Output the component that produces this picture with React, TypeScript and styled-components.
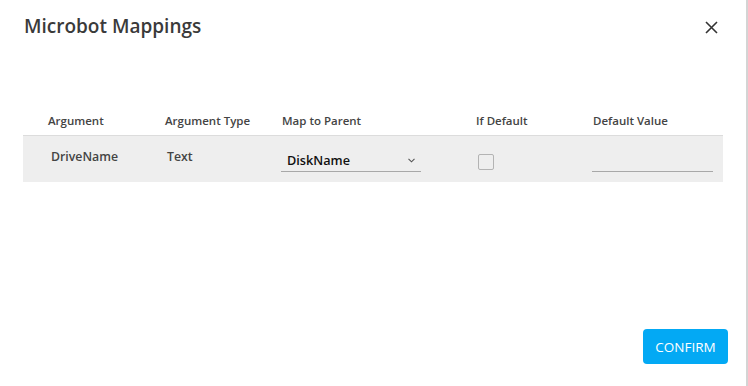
import React from "react";
import styled, { createGlobalStyle } from "styled-components";

const Global = createGlobalStyle`
  html, body { margin: 0; padding: 0; background: #fff; }
  body { font-family: "Open Sans", "Noto Sans", "Liberation Sans", sans-serif; }
  * { box-sizing: border-box; }
`;

const Dialog = styled.div`
  width: 748px;
  height: 386px;
  background: #fff;
  border-right: 2px solid #d4d4d4;
  display: flex;
  flex-direction: column;
  position: relative;
`;

const Header = styled.div`
  display: flex;
  align-items: center;
  justify-content: space-between;
  padding: 11px 28px 0 24px;
  height: 40px;
`;

const Title = styled.h2`
  margin: 0;
  font-size: 19px;
  font-weight: 600;
  color: #3a3a3a;
  letter-spacing: 0;
`;

const CloseButton = styled.button`
  border: none;
  background: transparent;
  padding: 0;
  width: 14px;
  height: 14px;
  display: flex;
  align-items: center;
  justify-content: center;
  cursor: pointer;
  margin-top: 4px;
`;

const Body = styled.div`
  padding: 67px 23px 0 23px;
  flex: 1;
`;

const Row = styled.div<{ $head?: boolean }>`
  display: grid;
  grid-template-columns: 117px 117px 194px 117px 1fr;
  width: 700px;
  align-items: center;
  background: ${(p) => (p.$head ? "#fff" : "#eeeeee")};
  height: ${(p) => (p.$head ? "29px" : "46px")};
  border-bottom: ${(p) => (p.$head ? "1px solid #dcdcdc" : "none")};
`;

const HeadCell = styled.div`
  padding-left: 25px;
  font-size: 11.5px;
  font-weight: 600;
  color: #444;
  padding-bottom: 1px;
`;

const Cell = styled.div<{ $pad: number; $shift?: number }>`
  padding-left: ${(p) => p.$pad}px;
  padding-top: ${(p) => Math.max(0, p.$shift ?? 0)}px;
  padding-bottom: ${(p) => Math.max(0, -(p.$shift ?? 0))}px;
  font-size: 12.3px;
  font-weight: 600;
  color: #444;
  display: flex;
  align-items: center;
`;

const SelectBox = styled.div`
  width: 140px;
  height: 25px;
  border-bottom: 1px solid #a8a8a8;
  display: flex;
  align-items: center;
  justify-content: space-between;
  padding: 3px 6px 0 6px;
  font-size: 12.7px;
  font-weight: 600;
  color: #111;
`;

const Checkbox = styled.span`
  width: 16px;
  height: 16px;
  border: 1px solid #b3b3b3;
  border-radius: 2px;
  background: #eee;
  display: inline-block;
`;

const TextInput = styled.div`
  width: 121px;
  height: 27px;
  border-bottom: 1px solid #a8a8a8;
`;

const Footer = styled.div`
  display: flex;
  justify-content: flex-end;
  padding: 0 18px 22px 0;
`;

const ConfirmButton = styled.button`
  background: #03a9f4;
  color: #fff;
  border: none;
  border-radius: 4px;
  width: 85px;
  height: 35px;
  font-family: "Open Sans", "Noto Sans", sans-serif;
  font-size: 13.5px;
  font-weight: 400;
  letter-spacing: 0;
  cursor: pointer;
`;

export default function App() {
  return (
    <>
      <Global />
      <Dialog>
        <Header>
          <Title>Microbot Mappings</Title>
          <CloseButton aria-label="close">
            <svg width="13" height="13" viewBox="0 0 13 13">
              <path d="M1 1 L12 12 M12 1 L1 12" stroke="#333" strokeWidth="1.6" fill="none" />
            </svg>
          </CloseButton>
        </Header>
        <Body>
          <Row $head>
            <HeadCell>Argument</HeadCell>
            <HeadCell>Argument Type</HeadCell>
            <HeadCell>Map to Parent</HeadCell>
            <HeadCell>If Default</HeadCell>
            <HeadCell>Default Value</HeadCell>
          </Row>
          <Row>
            <Cell $pad={28} $shift={-6}>DriveName</Cell>
            <Cell $pad={27} $shift={-6}>Text</Cell>
            <Cell $pad={24} $shift={0}>
              <SelectBox>
                <span>DiskName</span>
                <svg width="7" height="5" viewBox="0 0 7 5">
                  <path d="M0.5 0.8 L3.5 3.8 L6.5 0.8" stroke="#555" strokeWidth="1.1" fill="none" />
                </svg>
              </SelectBox>
            </Cell>
            <Cell $pad={27} $shift={6}>
              <Checkbox />
            </Cell>
            <Cell $pad={24} $shift={-2}>
              <TextInput />
            </Cell>
          </Row>
        </Body>
        <Footer>
          <ConfirmButton>CONFIRM</ConfirmButton>
        </Footer>
      </Dialog>
    </>
  );
}
